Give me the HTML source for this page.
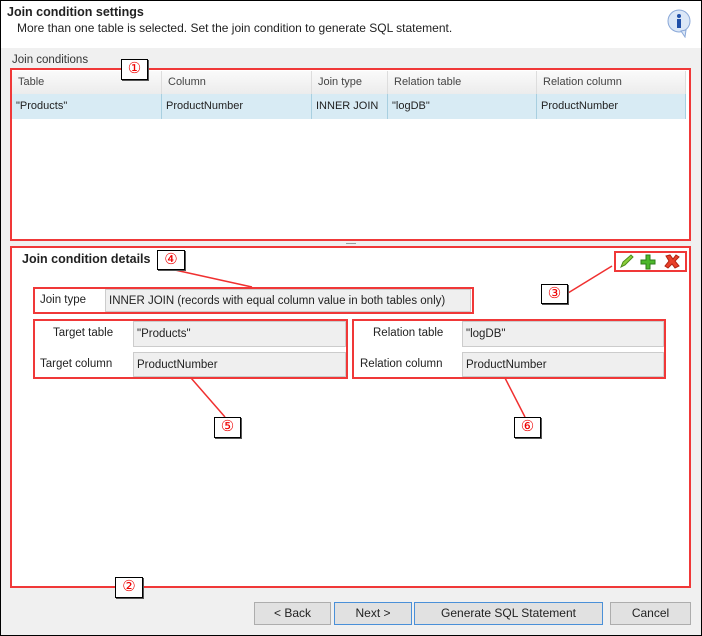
<!DOCTYPE html>
<html><head><style>
*{box-sizing:border-box;margin:0;padding:0}
body{width:702px;height:636px;font-family:"Liberation Sans",sans-serif;font-size:11.5px;color:#222;position:relative;overflow:hidden;background:#f0f0f0}
.a{position:absolute}
.frame{left:0;top:0;width:702px;height:636px;border:1px solid #000}
.rb{border:2px solid #f03838}
.lab{background:#fff;border:1.5px solid #000;box-shadow:1px 1px 0 #555;color:#e00;font-size:15px;text-align:center;line-height:18px}
.val{background:#efefef;border:1px solid #ccc;padding-left:3px;display:flex;align-items:center}
.btn{background:#e1e1e1;border:1px solid #adadad;text-align:center;line-height:21px;font-size:12px}
.th{top:71px;height:23px;line-height:22px;color:#444;padding-left:6px;border-right:1px solid #ddd;background:linear-gradient(#fafafa,#ececec);font-size:11px}
.td{top:94px;height:25px;line-height:25px;padding-left:4px;border-right:1px solid #a8cfe0;background:#d8ebf4;font-size:11px;white-space:nowrap}
</style></head><body>
<div class="a" style="left:0;top:0;width:702px;height:48px;background:#fff"></div>
<div class="a" style="left:7px;top:5px;font-weight:bold;font-size:12.5px">Join condition settings</div>
<div class="a" style="left:17px;top:21px;font-size:12px">More than one table is selected. Set the join condition to generate SQL statement.</div>
<svg class="a" style="left:666px;top:8px" width="28" height="30"><circle cx="13" cy="13" r="11" fill="#dbe7f7" stroke="#8aa8d8"/><path d="M15 23 L19 29 L20 22Z" fill="#dbe7f7" stroke="#8aa8d8"/><circle cx="13" cy="8" r="2" fill="#1f4fa8"/><rect x="11" y="11" width="4" height="9" fill="#1f4fa8"/></svg>
<div class="a" style="left:12px;top:54px;color:#333">Join conditions</div>
<div class="a" style="left:11px;top:69px;width:680px;height:172px;background:#fff"></div>
<div class="a th" style="left:12px;width:150px">Table</div>
<div class="a th" style="left:162px;width:150px">Column</div>
<div class="a th" style="left:312px;width:76px">Join type</div>
<div class="a th" style="left:388px;width:149px">Relation table</div>
<div class="a th" style="left:537px;width:149px">Relation column</div>
<div class="a td" style="left:12px;width:150px">"Products"</div>
<div class="a td" style="left:162px;width:150px">ProductNumber</div>
<div class="a td" style="left:312px;width:76px">INNER JOIN</div>
<div class="a td" style="left:388px;width:149px">"logDB"</div>
<div class="a td" style="left:537px;width:149px">ProductNumber</div>
<div class="a rb" style="left:10px;top:68px;width:681px;height:173px"></div>
<div class="a lab" style="left:121px;top:59px;width:27px;height:21px">①</div>
<div class="a" style="left:346px;top:243px;width:10px;height:1px;background:#999"></div>
<div class="a" style="left:11px;top:247px;width:679px;height:340px;background:#fff"></div>
<div class="a rb" style="left:10px;top:246px;width:681px;height:342px"></div>
<div class="a" style="left:22px;top:252px;font-weight:bold;font-size:12.5px">Join condition details</div>
<svg class="a" style="left:0;top:0" width="702" height="636"><g stroke="#f03030" stroke-width="1.5"><line x1="175" y1="270" x2="252" y2="287"/><line x1="568" y1="293" x2="612" y2="266"/><line x1="191" y1="378" x2="225" y2="417"/><line x1="505" y1="378" x2="525" y2="417"/></g></svg>
<div class="a lab" style="left:157px;top:250px;width:28px;height:20px">④</div>
<div class="a rb" style="left:614px;top:251px;width:73px;height:21px"></div>
<svg class="a" style="left:618px;top:253px" width="66" height="17"><path d="M3 14 L5 9 L13 2 L15 4 L7 12Z" fill="#8ccf3a" stroke="#4a8a1a"/><path d="M28 2h4v5h5v4h-5v5h-4v-5h-5v-4h5z" fill="#4cb82c" stroke="#2e7d1a"/><path d="M48 3 L52 2 L55 6 L58 2 L61 4 L57 8 L61 13 L57 15 L54 11 L50 15 L47 13 L51 8Z" fill="#e8402a" stroke="#b02010"/></svg>
<div class="a lab" style="left:541px;top:284px;width:27px;height:20px">③</div>
<div class="a rb" style="left:33px;top:287px;width:441px;height:27px"></div>
<div class="a" style="left:40px;top:294px">Join type</div>
<div class="a val" style="left:105px;top:289px;width:366px;height:23px">INNER JOIN (records with equal column value in both tables only)</div>
<div class="a rb" style="left:33px;top:319px;width:315px;height:60px"></div>
<div class="a" style="left:53px;top:327px">Target table</div>
<div class="a" style="left:40px;top:358px">Target column</div>
<div class="a val" style="left:133px;top:321px;width:213px;height:26px">"Products"</div>
<div class="a val" style="left:133px;top:352px;width:213px;height:25px">ProductNumber</div>
<div class="a rb" style="left:352px;top:319px;width:314px;height:60px"></div>
<div class="a" style="left:373px;top:327px">Relation table</div>
<div class="a" style="left:360px;top:358px">Relation column</div>
<div class="a val" style="left:462px;top:321px;width:202px;height:26px">"logDB"</div>
<div class="a val" style="left:462px;top:352px;width:202px;height:25px">ProductNumber</div>
<div class="a lab" style="left:214px;top:417px;width:27px;height:21px">⑤</div>
<div class="a lab" style="left:514px;top:417px;width:27px;height:21px">⑥</div>
<div class="a lab" style="left:115px;top:577px;width:28px;height:21px">②</div>
<div class="a btn" style="left:254px;top:602px;width:77px;height:23px">&lt; Back</div>
<div class="a btn" style="left:334px;top:602px;width:78px;height:23px;border-color:#4a90d8">Next &gt;</div>
<div class="a btn" style="left:414px;top:602px;width:189px;height:23px;border-color:#4a90d8">Generate SQL Statement</div>
<div class="a btn" style="left:610px;top:602px;width:81px;height:23px">Cancel</div>
<div class="a frame"></div>
</body></html>
